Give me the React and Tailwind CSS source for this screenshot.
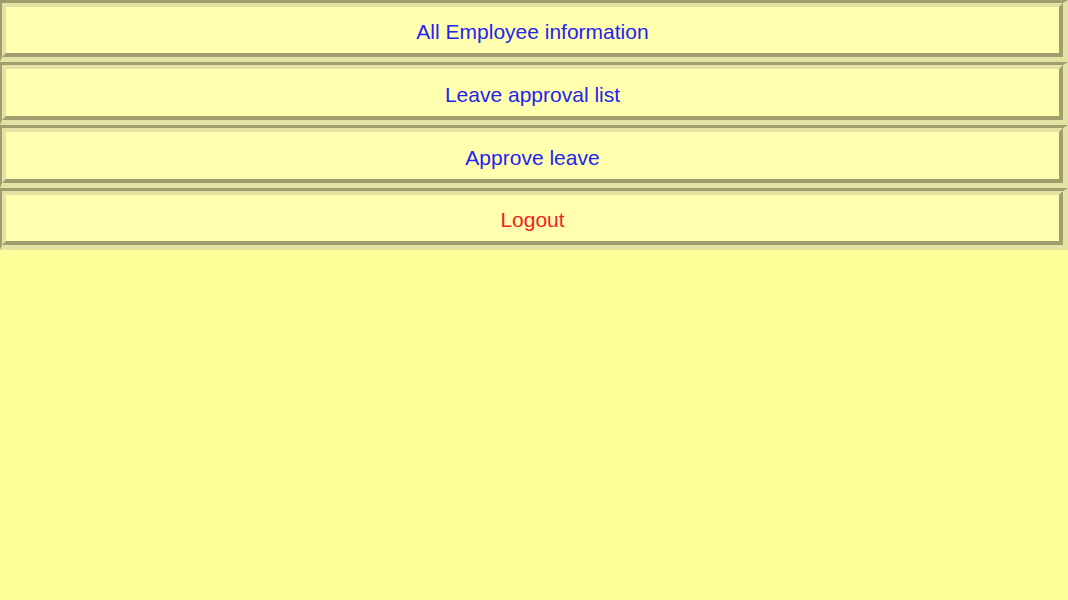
const items = [
  { label: "All Employee information", color: "text-[#2424f0]", h: "h-[62px]" },
  { label: "Leave approval list", color: "text-[#2424f0]", h: "h-[63px]" },
  { label: "Approve leave", color: "text-[#2424f0]", h: "h-[63px]" },
  { label: "Logout", color: "text-[#f02424]", h: "h-[62px]" },
];

const MenuButton = ({ label, color, h }) => {
  return (
    <div className={`${h} flex border-t-[3px] border-l-[2px] border-b-[5px] border-r-[5px] border-t-[#a09d6e] border-l-[#a09d6e] border-b-[#e4e3a3] border-r-[#e4e3a3]`}>
      <a
        href="#"
        className={`flex flex-1 items-center justify-center pt-1 border-[4px] border-t-[#e4e3a3] border-l-[#e4e3a3] border-b-[#a09d6e] border-r-[#a09d6e] bg-[#ffffaf] text-[21px] ${color}`}
      >
        {label}
      </a>
    </div>
  );
};

export default function App() {
  return (
    <div className="min-h-[600px] bg-[#ffff99] font-['Liberation_Sans',Arial,sans-serif]">
      {items.map((item) => (
        <MenuButton key={item.label} {...item} />
      ))}
    </div>
  );
}
